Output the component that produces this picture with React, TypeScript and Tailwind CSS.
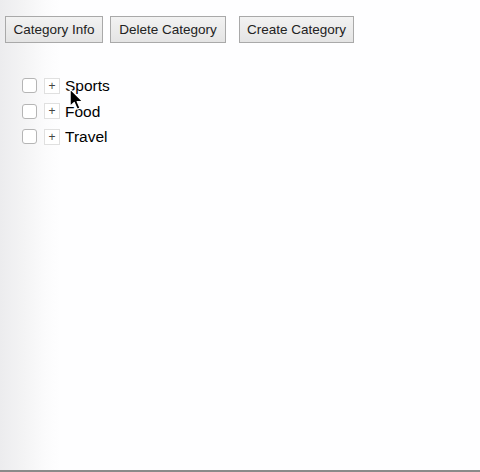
import React from "react";

const categories = ["Sports", "Food", "Travel"];

const Cursor: React.FC = () => (
  <svg
    className="absolute left-[69px] top-[88px]"
    width="16"
    height="24"
    viewBox="0 0 14 21"
  >
    <path
      d="M1 1 L1 16 L4.6 12.6 L7.2 18.6 L9.6 17.6 L7.1 11.8 L12 11.8 Z"
      fill="#000"
      stroke="#fff"
      strokeWidth="1"
      strokeLinejoin="round"
    />
  </svg>
);

const App: React.FC = () => {
  const btn =
    "h-[27px] pt-[2px] border border-[#a9a9a9] bg-[linear-gradient(#f2f2f2,#e4e4e4)] text-[13.5px] text-[#222] flex items-center justify-center";

  return (
    <div
      className="relative w-[480px] h-[472px] overflow-hidden bg-[linear-gradient(to_right,#ececee,#f4f4f5_25px,#fbfbfc_45px,#fefeff_60px)] flex flex-col"
      style={{ fontFamily: '"Liberation Sans", Arial, sans-serif' }}
    >
      <div className="flex pt-4 pl-[5px]">
        <button className={`${btn} w-[98px]`}>Category Info</button>
        <button className={`${btn} w-[116px] ml-[7px]`}>Delete Category</button>
        <button className={`${btn} w-[115px] ml-[13px]`}>Create Category</button>
      </div>

      <ul className="mt-[30px] pl-[22px]">
        {categories.map((name) => (
          <li key={name} className="flex items-center h-[25.5px]">
            <span className="w-[15px] h-[15px] rounded-[3px] border border-[#b5b5b5] bg-white" />
            <span className="ml-[7px] w-[16px] h-[16px] border border-[#e0e0e0] bg-white flex items-center justify-center text-[12px] leading-none text-[#444]">
              +
            </span>
            <span className="ml-[5px] text-[15.5px] text-black">{name}</span>
          </li>
        ))}
      </ul>

      <div className="mt-auto h-[2px] bg-[#8a8a8a]" />
      <Cursor />
    </div>
  );
};

export default App;
